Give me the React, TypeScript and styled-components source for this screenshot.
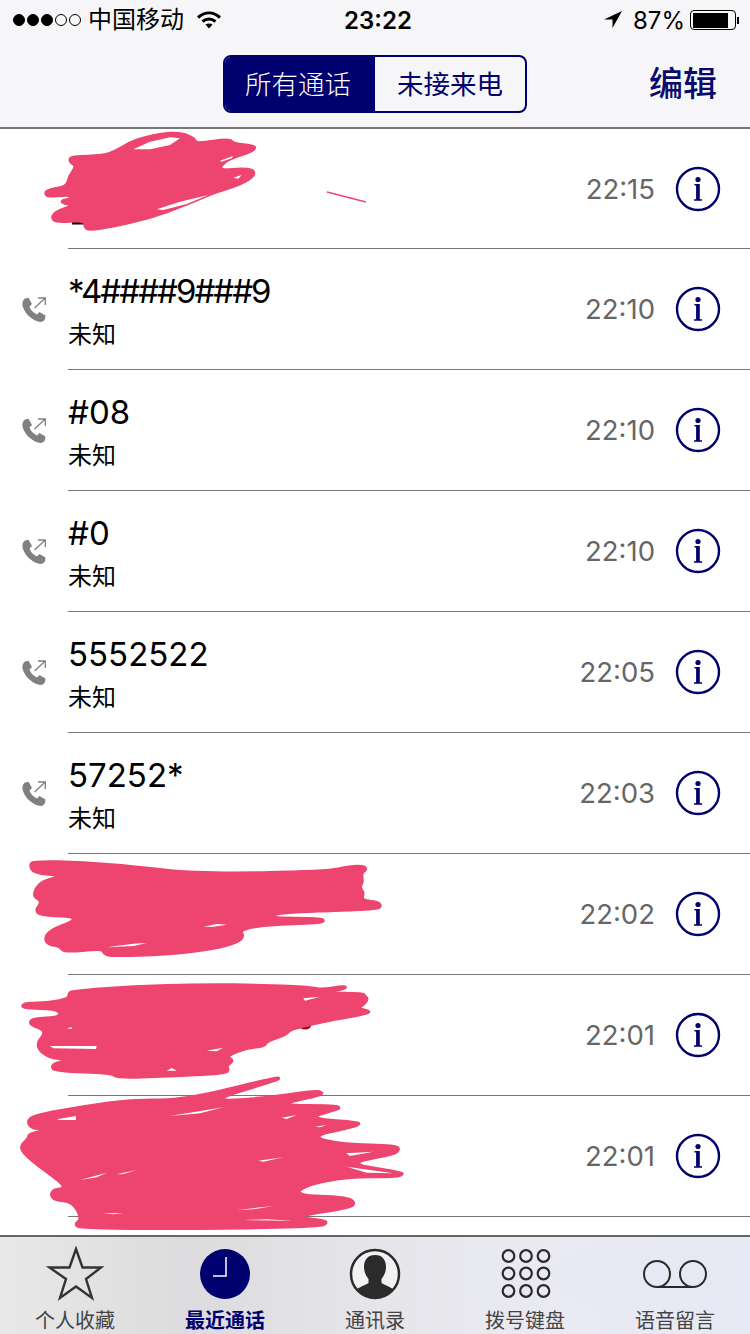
// 최근 통화 목록 화면
import styled, { createGlobalStyle } from "styled-components";

const NAVY = "#00006e";
const SCRIBBLE = "#ee4570";
const FONT = `Inter, "Noto Sans CJK SC", sans-serif`;

type Call = { name?: string; sub?: string; time: string; outgoing?: boolean; tight?: boolean };

const calls: Call[] = [
  { time: "22:15" },
  { name: "*4####9###9", sub: "未知", time: "22:10", outgoing: true, tight: true },
  { name: "#08", sub: "未知", time: "22:10", outgoing: true },
  { name: "#0", sub: "未知", time: "22:10", outgoing: true },
  { name: "5552522", sub: "未知", time: "22:05", outgoing: true },
  { name: "57252*", sub: "未知", time: "22:03", outgoing: true },
  { time: "22:02" },
  { time: "22:01" },
  { time: "22:01" },
];

// zoom crop coordinates (3x) -> page coordinates
const toPoint = ([x, y]: number[], top: number) => [x / 3, top + y / 3];
const fmt = (p: number[]) => `${p[0].toFixed(1)} ${p[1].toFixed(1)}`;

const toPath = (pts: number[][], top: number) =>
  "M" + pts.map((p) => fmt(toPoint(p, top))).join("L") + "Z";

// corners rounded through the midpoints, so the marker strokes look soft
const toSmoothPath = (pts: number[][], top: number) => {
  const page = pts.map((p) => toPoint(p, top));
  const mid = (a: number[], b: number[]) => [(a[0] + b[0]) / 2, (a[1] + b[1]) / 2];
  let d = "M" + fmt(mid(page[page.length - 1], page[0]));
  page.forEach((p, i) => {
    d += `Q${fmt(p)} ${fmt(mid(p, page[(i + 1) % page.length]))}`;
  });
  return d + "Z";
};

const scribbles: { top: number; outline: number[][]; holes: number[][][] }[] = [
  {
    top: 130,
    outline: [[207,88],[215,78],[310,76],[350,60],[400,30],[480,10],[545,7],[585,25],[590,40],[690,25],[700,40],[760,45],[768,55],[750,68],[680,90],[655,120],[720,115],[760,118],[765,135],[740,155],[690,175],[640,190],[560,225],[450,265],[340,290],[265,302],[252,290],[253,272],[170,278],[153,265],[165,245],[220,225],[185,220],[185,210],[215,205],[205,195],[145,202],[133,190],[145,178],[200,168],[205,140],[228,108],[212,100]],
    holes: [
      [[400,58],[450,35],[510,22],[540,25],[510,45],[450,58]],
      [[660,92],[700,78],[695,85],[665,95]],
      [[470,238],[540,215],[625,195],[560,222],[490,240]],
      [[700,143],[725,135],[715,146]],
    ],
  },
  {
    top: 850,
    outline: [[88,45],[100,32],[250,36],[400,48],[600,70],[980,63],[1050,48],[1095,47],[1100,60],[1085,70],[1090,95],[1080,112],[1093,128],[1085,150],[1135,155],[1145,168],[1130,180],[850,187],[800,203],[960,203],[975,212],[960,220],[800,225],[720,240],[733,258],[715,278],[640,298],[500,315],[330,320],[310,310],[305,298],[190,308],[180,290],[145,285],[132,265],[150,240],[222,212],[215,200],[120,197],[105,180],[125,155],[100,140],[105,115],[130,90],[190,78],[100,70]],
    holes: [
      [[610,230],[650,222],[680,224],[640,230]],
      [[320,292],[400,281],[440,279],[400,288]],
    ],
  },
  {
    top: 850,
    outline: [[205,430],[215,422],[400,408],[600,402],[800,404],[930,410],[965,418],[1030,407],[1040,412],[1030,418],[975,428],[1090,428],[1095,438],[1105,445],[1095,462],[1075,475],[1110,482],[1105,492],[1000,510],[930,525],[870,540],[860,555],[800,575],[795,590],[740,595],[680,618],[703,632],[680,648],[688,660],[675,672],[500,680],[350,685],[335,670],[165,665],[153,650],[165,638],[210,630],[150,625],[115,600],[112,575],[130,555],[130,540],[95,527],[88,515],[100,505],[180,500],[175,482],[145,478],[70,475],[65,465],[80,458],[150,457],[205,445]],
    holes: [
      [[150,588],[290,588],[288,597],[160,595]],
      [[620,602],[670,593],[650,604]],
      [[910,445],[960,440],[915,452]],
      [[500,662],[515,654],[530,662]],
      [[200,535],[215,532],[215,537]],
    ],
  },
  {
    top: 1070,
    outline: [[80,155],[100,135],[250,108],[400,87],[550,90],[830,20],[840,25],[830,32],[620,95],[820,80],[950,60],[970,68],[960,78],[830,105],[1010,105],[1022,115],[1000,122],[925,145],[1075,155],[1080,163],[1060,172],[930,200],[1030,222],[1190,225],[1200,240],[1180,255],[1040,280],[1200,305],[1212,313],[1190,322],[1040,322],[920,345],[885,375],[1040,380],[1068,398],[1050,415],[880,440],[975,450],[982,460],[960,470],[700,477],[240,477],[222,462],[245,445],[215,395],[165,392],[150,375],[160,358],[190,355],[185,340],[90,270],[55,232],[85,205],[85,190],[150,178],[95,178]],
    holes: [
      [[170,148],[228,138],[228,150],[180,150]],
      [[510,138],[670,112],[600,130]],
      [[845,143],[890,135],[860,147]],
      [[1038,250],[1120,245],[1050,258]],
      [[1040,290],[1180,310],[1100,308]],
      [[775,272],[850,262],[790,275]],
      [[240,330],[320,308],[290,322]],
      [[350,313],[410,300],[370,312]],
      [[310,430],[370,430],[340,433]],
      [[710,420],[820,408],[760,418]],
      [[730,450],[880,452],[800,448]],
      [[945,170],[980,165],[960,172]],
    ],
  },
];

const PhoneIcon = () => (
  <svg width="26" height="26" viewBox="0 0 26 26">
    <path
      fill="#808080"
      d="M4 1.500 7.500.7 11 7 8.500 9.500C9.500 13 12.500 16 16 17.500L18.500 15l6 3.500-.5 3.500c-1 2.500-4 3.500-7 2.500C9.500 22 3.500 16 1.500 8.500 1 5.500 2 3 4 1.500Z"
    />
    <path fill="none" stroke="#808080" strokeWidth="1.300" d="M13.500 11 24 1.200M17 1h7.300v7" />
  </svg>
);

const InfoIcon = () => (
  <svg width="46" height="46" viewBox="0 0 46 46">
    <circle cx="23" cy="23" r="21" fill="none" stroke={NAVY} strokeWidth="2.400" />
    <circle cx="23" cy="13.500" r="2.600" fill={NAVY} />
    <path fill={NAVY} d="M19.500 18h5.300v15.300h2.200v1.400h-8v-1.400h2.100V19.400h-1.600Z" />
  </svg>
);

const StarIcon = () => (
  <svg width="60" height="56" viewBox="0 0 60 56">
    <path
      fill="none"
      stroke="#333"
      strokeWidth="2.400"
      d="M31 3 37.500 21.500H56L41 33 47 52 31 40.500 15 52 21 33 4.500 21.500H24.500Z"
    />
  </svg>
);

const ClockIcon = () => (
  <svg width="60" height="56" viewBox="0 0 60 56">
    <circle cx="30" cy="28" r="25" fill={NAVY} />
    <path fill="none" stroke="#fff" strokeWidth="1.500" d="M31 11V30H18" />
  </svg>
);

const ContactIcon = () => (
  <svg width="60" height="56" viewBox="0 0 60 56">
    <clipPath id="contact-clip">
      <circle cx="30" cy="28" r="24" />
    </clipPath>
    <circle cx="30" cy="28" r="24" fill="#f2f2f2" />
    <path
      clipPath="url(#contact-clip)"
      fill="#2b2b2b"
      d="M30 9c-7 0-11 4.500-11 12 0 5 2 9 4.500 12v4c-4 3-13 4-16 12v8h45v-8c-3-8-12-9-16-12v-4c2.500-3 4.500-7 4.500-12 0-7.500-4-12-10.500-12Z"
    />
    <circle cx="30" cy="28" r="24" fill="none" stroke="#2b2b2b" strokeWidth="2.500" />
  </svg>
);

const KeypadIcon = () => (
  <svg width="60" height="56" viewBox="0 0 60 56">
    {[10, 27.5, 45].map((cy) =>
      [13.5, 31, 48.5].map((cx) => (
        <circle key={`${cx}-${cy}`} cx={cx} cy={cy} r="5.800" fill="none" stroke="#2b2b2b" strokeWidth="2.200" />
      ))
    )}
  </svg>
);

const VoicemailIcon = () => (
  <svg width="70" height="56" viewBox="0 0 70 56">
    <path
      fill="none"
      stroke="#2b2b2b"
      strokeWidth="2"
      d="M17 41h36M17 41a13 13 0 1 1 0-26 13 13 0 0 1 0 26ZM53 41a13 13 0 1 1 0-26 13 13 0 0 1 0 26Z"
    />
  </svg>
);

const tabs = [
  { label: "个人收藏", icon: <StarIcon /> },
  { label: "最近通话", icon: <ClockIcon />, active: true },
  { label: "通讯录", icon: <ContactIcon /> },
  { label: "拨号键盘", icon: <KeypadIcon /> },
  { label: "语音留言", icon: <VoicemailIcon /> },
];

const App = () => {
  return (
    <Screen>
      <GlobalStyle />
      <Header>
        <StatusBar>
          <StatusLeft>
            <Signal>
              {[1, 1, 1, 0, 0].map((on, i) => (
                <SignalDot key={i} $on={!!on} />
              ))}
            </Signal>
            <Carrier>中国移动</Carrier>
            <svg width="26" height="18" viewBox="0 0 26 18">
              <path
                fill="none"
                stroke="#000"
                strokeWidth="3"
                d="M2 6.500C9 .500 17 .500 24 6.500M6.500 10.500C10.500 7.500 15.500 7.500 19.500 10.500"
              />
              <path d="M9.500 13.500C11.500 12 14.500 12 16.500 13.500L13 17.500Z" />
            </svg>
          </StatusLeft>
          <Clock>23:22</Clock>
          <StatusRight>
            <svg width="20" height="20" viewBox="0 0 20 20">
              <path d="M19 1 1 9.500h8.500V18Z" />
            </svg>
            <Battery>87%</Battery>
            <BatteryShell>
              <BatteryFill />
            </BatteryShell>
            <BatteryTip />
          </StatusRight>
        </StatusBar>
        <NavBar>
          <Segment>
            <SegmentItem $active>所有通话</SegmentItem>
            <SegmentItem>未接来电</SegmentItem>
          </Segment>
          <EditButton>编辑</EditButton>
        </NavBar>
      </Header>

      <CallList>
        {calls.map((call, i) => (
          <CallRow key={i} $first={i === 0}>
            <CallType>{call.outgoing && <PhoneIcon />}</CallType>
            <RowBody>
              <CallText>
                <CallName $tight={call.tight}>{call.name}</CallName>
                <CallSub>{call.sub}</CallSub>
              </CallText>
              <CallTime>{call.time}</CallTime>
              <InfoIcon />
            </RowBody>
          </CallRow>
        ))}
      </CallList>

      <TabBar>
        {tabs.map((tab) => (
          <TabItem key={tab.label}>
            {tab.icon}
            <TabLabel $active={tab.active}>{tab.label}</TabLabel>
          </TabItem>
        ))}
      </TabBar>

      {/* 번호 가린 낙서 */}
      <ScribbleLayer viewBox="0 0 750 1334">
        <ellipse cx="305" cy="1026" rx="6" ry="3.500" fill="#8a0a20" />
        <path fill="#000" d="M72 222h12v2.500H72ZM90 948l16-3 1 2-16 3ZM164 1069l12-2 1 2-12 1Z" />
        {scribbles.map((s, i) => (
          <g key={i}>
            <path
              fill={SCRIBBLE}
              stroke={SCRIBBLE}
              strokeWidth="2"
              strokeLinejoin="round"
              d={toSmoothPath(s.outline, s.top)}
            />
            <path fill="#fff" d={s.holes.map((h) => toPath(h, s.top)).join("")} />
          </g>
        ))}
        <path stroke={SCRIBBLE} strokeWidth="1.500" d="M327 192 366 202" />
      </ScribbleLayer>
    </Screen>
  );
};

export default App;

const GlobalStyle = createGlobalStyle`
  html, body {
    margin: 0;
    padding: 0;
    background: #fff;
  }
`;

const Screen = styled.div`
  position: relative;
  width: 750px;
  height: 1334px;
  display: flex;
  flex-direction: column;
  overflow: hidden;
  font-family: ${FONT};
  color: #000;
  background: #fff;
`;

const Header = styled.header`
  flex: none;
  height: 129px;
  box-sizing: border-box;
  background: #f6f6f8;
  border-bottom: 2px solid #777;
`;

const StatusBar = styled.div`
  height: 40px;
  display: grid;
  grid-template-columns: 1fr auto 1fr;
  align-items: center;
  padding: 0 11px 0 13px;
`;

const StatusLeft = styled.div`
  display: flex;
  align-items: center;
`;

const Signal = styled.div`
  display: flex;
  gap: 2px;
  margin-right: 7px;
`;

const SignalDot = styled.span<{ $on: boolean }>`
  width: 12px;
  height: 12px;
  box-sizing: border-box;
  border-radius: 50%;
  border: 1.5px solid #000;
  background: ${(p) => (p.$on ? "#000" : "transparent")};
`;

const Carrier = styled.span`
  font-size: 24px;
  line-height: 30px;
  margin-right: 12px;
`;

const Clock = styled.span`
  font-size: 24px;
  font-weight: 600;
  margin-left: 4px;
`;

const StatusRight = styled.div`
  display: flex;
  align-items: center;
  justify-content: flex-end;
`;

const Battery = styled.span`
  font-size: 24px;
  margin: 0 5px 0 10px;
`;

const BatteryShell = styled.div`
  width: 46px;
  height: 20px;
  box-sizing: border-box;
  border: 1.5px solid #000;
  border-radius: 4px;
  padding: 1.5px;
`;

const BatteryFill = styled.div`
  width: 86%;
  height: 100%;
  background: #000;
`;

const BatteryTip = styled.div`
  width: 2px;
  height: 7px;
  margin-left: 1px;
  background: #000;
`;

const NavBar = styled.nav`
  height: 87px;
  display: grid;
  grid-template-columns: 1fr auto 1fr;
  align-items: start;
  padding: 15px 33px 0;
  box-sizing: border-box;
`;

const Segment = styled.div`
  grid-column: 2;
  width: 304px;
  height: 58px;
  box-sizing: border-box;
  display: flex;
  border: 2px solid ${NAVY};
  border-radius: 8px;
  overflow: hidden;
`;

const SegmentItem = styled.div<{ $active?: boolean }>`
  flex: 0 0 50%;
  box-sizing: border-box;
  display: flex;
  align-items: center;
  justify-content: center;
  padding: 0 ${(p) => (p.$active ? 4 : 0)}px 3px 0;
  font-size: 26.5px;
  font-weight: ${(p) => (p.$active ? 300 : 400)};
  color: ${(p) => (p.$active ? "#fff" : NAVY)};
  background: ${(p) => (p.$active ? NAVY : "transparent")};
`;

const EditButton = styled.div`
  justify-self: end;
  font-size: 34px;
  font-weight: 500;
  line-height: 58px;
  color: #0a0a6c;
`;

const CallList = styled.main`
  flex: 1;
  min-height: 0;
  overflow: hidden;
`;

const CallRow = styled.div<{ $first?: boolean }>`
  height: ${(p) => (p.$first ? 120 : 121)}px;
  display: flex;
`;

const CallType = styled.div`
  flex: none;
  width: 68px;
  box-sizing: border-box;
  padding-left: 21px;
  display: flex;
  align-items: center;
`;

const RowBody = styled.div`
  flex: 1;
  display: flex;
  align-items: center;
  padding-right: 29px;
  border-bottom: 1px solid #777;
`;

const CallText = styled.div`
  flex: 1;
  display: flex;
  flex-direction: column;
  gap: 11px;
  padding-top: 2px;
`;

const CallName = styled.div<{ $tight?: boolean }>`
  font-size: 33px;
  line-height: 38px;
  letter-spacing: ${(p) => (p.$tight ? "-2px" : "0")};
`;

const CallSub = styled.div`
  font-size: 24px;
  line-height: 28px;
`;

const CallTime = styled.div`
  font-size: 27.5px;
  color: #666;
  margin-right: 20px;
`;

const TabBar = styled.footer`
  flex: none;
  height: 99px;
  box-sizing: border-box;
  display: flex;
  border-top: 2px solid #666;
  background:
    radial-gradient(ellipse 260px 90px at 680px 40px, #e6e8f5 0%, rgba(230, 232, 245, 0) 100%),
    linear-gradient(90deg, #e8e8e8 0%, #dcdcde 25%, #e6e5ea 50%, #ecebf2 75%, #e6e8f4 100%);
`;

const TabItem = styled.div`
  flex: 1;
  display: flex;
  flex-direction: column;
  align-items: center;
  padding-top: 9px;
`;

const TabLabel = styled.div<{ $active?: boolean }>`
  font-size: 20px;
  line-height: 24px;
  margin-top: 7px;
  font-weight: ${(p) => (p.$active ? 700 : 400)};
  color: ${(p) => (p.$active ? NAVY : "#444")};
`;

const ScribbleLayer = styled.svg`
  position: absolute;
  top: 0;
  left: 0;
  width: 750px;
  height: 1334px;
  pointer-events: none;
`;
